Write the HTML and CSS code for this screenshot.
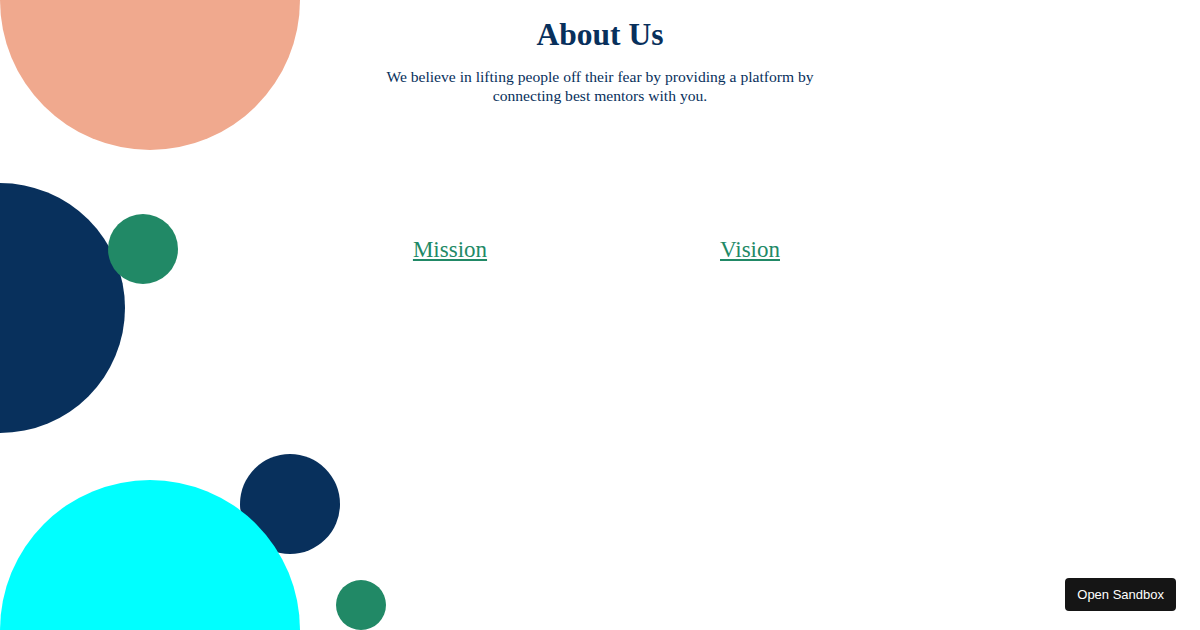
FILE: index.html
```html
<!DOCTYPE html>
<html lang="en">
<head>
<meta charset="utf-8">
<title>About Us</title>
<link rel="stylesheet" href="styles.css">
</head>
<body>
<div class="shapes" aria-hidden="true">
  <span class="dot dot-salmon"></span>
  <span class="dot dot-navy-big"></span>
  <span class="dot dot-green-mid"></span>
  <span class="dot dot-navy-small"></span>
  <span class="dot dot-cyan"></span>
  <span class="dot dot-green-small"></span>
</div>
<main class="about">
  <h1 class="about-title">About Us</h1>
  <p class="about-text">We believe in lifting people off their fear by providing a platform by connecting best mentors with you.</p>
  <nav class="about-links">
    <div class="about-col"><a class="about-link" href="#mission">Mission</a></div>
    <div class="about-col"><a class="about-link" href="#vision">Vision</a></div>
  </nav>
</main>
<a class="sandbox-btn" href="#">Open Sandbox</a>
</body>
</html>
```
FILE: styles.css
```css
html, body {
  margin: 0;
  padding: 0;
  background: #ffffff;
  overflow: hidden;
}
body {
  width: 1200px;
  height: 630px;
  position: relative;
  font-family: "Liberation Serif", "Times New Roman", serif;
}
.shapes {
  position: absolute;
  inset: 0;
  overflow: hidden;
  pointer-events: none;
}
.dot {
  position: absolute;
  border-radius: 50%;
  display: block;
}
.dot-salmon {
  left: 0;
  top: -150px;
  width: 300px;
  height: 300px;
  background: #f0a98e;
}
.dot-navy-big {
  left: -125px;
  top: 183px;
  width: 250px;
  height: 250px;
  background: #08305c;
}
.dot-green-mid {
  left: 108px;
  top: 214px;
  width: 70px;
  height: 70px;
  background: #218966;
}
.dot-navy-small {
  left: 240px;
  top: 454px;
  width: 100px;
  height: 100px;
  background: #08305c;
}
.dot-cyan {
  left: 0;
  top: 480px;
  width: 300px;
  height: 300px;
  background: #00ffff;
}
.dot-green-small {
  left: 336px;
  top: 580px;
  width: 50px;
  height: 50px;
  background: #218966;
}
.about {
  position: relative;
  display: flex;
  flex-direction: column;
  align-items: center;
  padding-top: 17px;
}
.about-title {
  margin: 0;
  font-size: 31.5px;
  font-weight: 700;
  color: #08305c;
  text-align: center;
}
.about-text {
  margin: 15px 0 0;
  width: 450px;
  font-size: 15.6px;
  line-height: 18.5px;
  color: #08305c;
  text-align: center;
}
.about-links {
  margin-top: 132px;
  width: 600px;
  display: grid;
  grid-template-columns: 1fr 1fr;
}
.about-col {
  text-align: center;
}
.about-link {
  font-size: 23px;
  color: #218966;
  text-decoration: underline;
}
.sandbox-btn {
  position: fixed;
  right: 24px;
  bottom: 19px;
  height: 33px;
  padding: 0 12px;
  display: flex;
  align-items: center;
  background: #151515;
  color: #ffffff;
  border-radius: 4px;
  box-sizing: border-box;
  font-family: "Liberation Sans", Arial, sans-serif;
  font-size: 13px;
  text-decoration: none;
}
```
